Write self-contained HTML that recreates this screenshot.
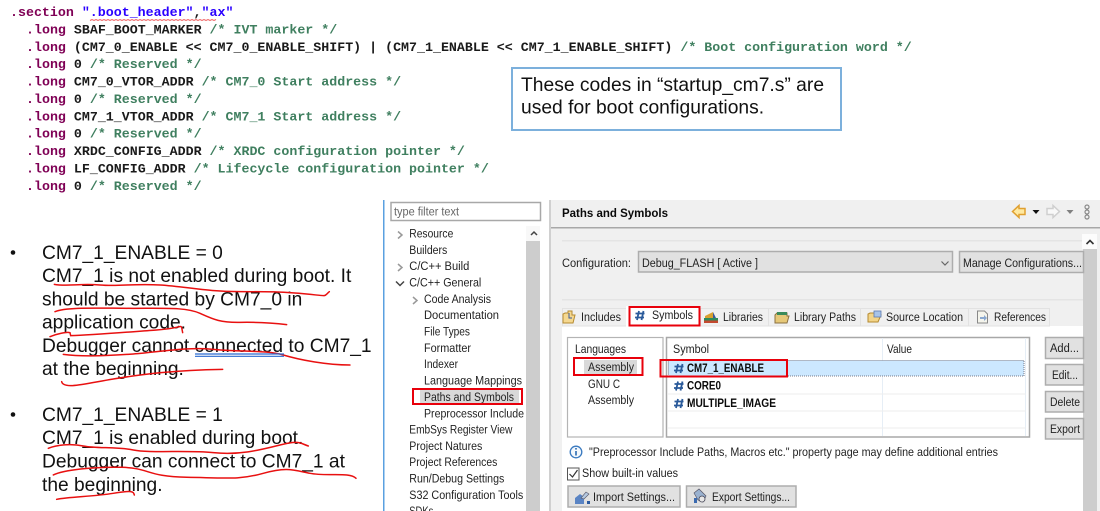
<!DOCTYPE html>
<html><head><meta charset="utf-8"><style>
html,body{margin:0;padding:0;background:#fff}
svg{display:block;filter:blur(.3px)}
.c{font:bold 13.31px "Liberation Mono",monospace;white-space:pre}
.k{fill:#7f0055}.s{fill:#2a00ff}.g{fill:#3f7f5f}.b{fill:#1a1a1a}
.t{font:19.2px "Liberation Sans",sans-serif;fill:#111}
.n{font:19.27px "Liberation Sans",sans-serif;fill:#111}
.u{font:12.2px "Liberation Sans",sans-serif;fill:#222}
.ub{font:bold 12.2px "Liberation Sans",sans-serif;fill:#0a0a0a}
.r{fill:none;stroke:#e8000b;stroke-width:2}
.w{fill:none;stroke:#e81010;stroke-width:4.5;stroke-linecap:round}
.btn{fill:#e1e1e1;stroke:#adadad;stroke-width:1.5}
.tab{fill:#f0f0f0;stroke:#e2e2e2;stroke-width:1}
</style></head><body>
<svg width="1100" height="511" viewBox="0 0 1100 511" xmlns="http://www.w3.org/2000/svg">
<rect width="1100" height="511" fill="#fff"/>
<!-- code -->
<g class="c" xml:space="preserve">
<text x="10" y="16" class="c"><tspan class="k">.section</tspan> <tspan class="s">".boot_header"</tspan><tspan class="b">,</tspan><tspan class="s">"ax"</tspan></text>
<text x="26" y="33.500" class="c"><tspan class="k">.long</tspan> <tspan class="b">SBAF_BOOT_MARKER</tspan> <tspan class="g">/* IVT marker */</tspan></text>
<text x="26" y="50.800" class="c"><tspan class="k">.long</tspan> <tspan class="b">(CM7_0_ENABLE &lt;&lt; CM7_0_ENABLE_SHIFT) | (CM7_1_ENABLE &lt;&lt; CM7_1_ENABLE_SHIFT)</tspan> <tspan class="g">/* Boot configuration word */</tspan></text>
<text x="26" y="68.200" class="c"><tspan class="k">.long</tspan> <tspan class="b">0</tspan> <tspan class="g">/* Reserved */</tspan></text>
<text x="26" y="85.600" class="c"><tspan class="k">.long</tspan> <tspan class="b">CM7_0_VTOR_ADDR</tspan> <tspan class="g">/* CM7_0 Start address */</tspan></text>
<text x="26" y="103" class="c"><tspan class="k">.long</tspan> <tspan class="b">0</tspan> <tspan class="g">/* Reserved */</tspan></text>
<text x="26" y="120.300" class="c"><tspan class="k">.long</tspan> <tspan class="b">CM7_1_VTOR_ADDR</tspan> <tspan class="g">/* CM7_1 Start address */</tspan></text>
<text x="26" y="137.700" class="c"><tspan class="k">.long</tspan> <tspan class="b">0</tspan> <tspan class="g">/* Reserved */</tspan></text>
<text x="26" y="155.200" class="c"><tspan class="k">.long</tspan> <tspan class="b">XRDC_CONFIG_ADDR</tspan> <tspan class="g">/* XRDC configuration pointer */</tspan></text>
<text x="26" y="172.500" class="c"><tspan class="k">.long</tspan> <tspan class="b">LF_CONFIG_ADDR</tspan> <tspan class="g">/* Lifecycle configuration pointer */</tspan></text>
<text x="26" y="190" class="c"><tspan class="k">.long</tspan> <tspan class="b">0</tspan> <tspan class="g">/* Reserved */</tspan></text>
</g>
<path d="M90 20.500l2-1 2 1 2-1 2 1 2-1 2 1 2-1 2 1 2-1 2 1 2-1 2 1 2-1 2 1 2-1 2 1 2-1 2 1 2-1 2 1 2-1 2 1 2-1 2 1 2-1 2 1 2-1 2 1 2-1 2 1 2-1 2 1 2-1 2 1 2-1 2 1 2-1 2 1 2-1 2 1 2-1 2 1 2-1 2 1 2-1 2 1 2-1 2 1 2-1 2 1 2-1 2 1 2-1 2 1 2-1 2 1 2-1 2 1 2-1 2 1 2-1 2 1 2-1" fill="none" stroke="#f06060" stroke-width="1"/>
<!-- note box -->
<rect x="512" y="68" width="329" height="62" fill="#fff" stroke="#7cb0dc" stroke-width="2"/>
<text x="521" y="91" class="n">These codes in “startup_cm7.s” are</text>
<text x="521" y="113.500" class="n">used for boot configurations.</text>
<!-- bullets text -->
<circle cx="13" cy="252.500" r="2.300" fill="#111"/>
<circle cx="13" cy="414.500" r="2.300" fill="#111"/>
<text x="42" y="259" class="t">CM7_1_ENABLE = 0</text>
<text x="42" y="282" class="t">CM7_1 is not enabled during boot. It</text>
<text x="42" y="305.300" class="t">should be started by CM7_0 in</text>
<text x="42" y="328.500" class="t">application code.</text>
<text x="42" y="352" class="t">Debugger cannot connected to CM7_1</text>
<text x="42" y="375" class="t">at the beginning.</text>
<text x="42" y="421" class="t">CM7_1_ENABLE = 1</text>
<text x="42" y="444" class="t">CM7_1 is enabled during boot.</text>
<text x="42" y="467.300" class="t">Debugger can connect to CM7_1 at</text>
<text x="42" y="491" class="t">the beginning.</text>
<g transform="translate(0,230) scale(.3333)">
<path class="w" d="M163 163C200 170 240 160 300 165S400 160 480 165S620 185 720 185S850 185 920 192S970 200 988 185"/>
<path class="w" d="M165 245C200 230 300 235 400 235S560 232 600 250S660 278 720 277S830 280 860 284"/>
<path class="w" d="M150 320C170 312 200 305 210 308L212 317C280 315 400 305 470 300S540 285 545 292L548 308"/>
<path class="w" d="M190 373C240 380 320 378 400 372S560 350 640 358S800 360 850 375S980 405 1050 405"/>
<path class="w" d="M185 455C190 480 260 460 340 447S520 420 668 418"/>
<path d="M585 372H852M585 379H852" fill="none" stroke="#2a6ad0" stroke-width="3.500"/>
<path class="w" d="M145 655C170 645 210 640 250 648S350 650 400 660S560 660 640 668S780 660 840 645S900 640 925 648"/>
<path class="w" d="M160 735C190 720 280 710 365 712S440 740 560 742S720 750 790 730S880 720 930 730S1050 725 1068 745"/>
<path class="w" d="M170 808C210 800 280 800 340 790S400 785 403 795"/>
</g>
<!-- left blue divider -->
<rect x="383" y="200" width="1.500" height="311" fill="#5aa0e0"/>
<!-- tree panel -->
<rect x="391" y="202.500" width="149.500" height="18" fill="#fff" stroke="#a8a8a8" stroke-width="1.500"/>
<text x="394" y="215.500" class="u" style="fill:#666" textLength="65" lengthAdjust="spacingAndGlyphs">type filter text</text>
<rect x="526" y="226" width="14" height="285" fill="#cdcdcd"/>
<rect x="526" y="226" width="14" height="15" fill="#f8f8f8"/>
<path d="M531 235l3-3 3 3" fill="none" stroke="#444" stroke-width="1.500"/>
<g>
<text x="409.300" y="237.500" class="u" textLength="44" lengthAdjust="spacingAndGlyphs">Resource</text>
<text x="409.300" y="254" class="u" textLength="38" lengthAdjust="spacingAndGlyphs">Builders</text>
<text x="409.300" y="270" class="u" textLength="60" lengthAdjust="spacingAndGlyphs">C/C++ Build</text>
<text x="409.300" y="286.500" class="u" textLength="72" lengthAdjust="spacingAndGlyphs">C/C++ General</text>
<text x="424" y="303" class="u" textLength="67" lengthAdjust="spacingAndGlyphs">Code Analysis</text>
<text x="424" y="319" class="u" textLength="75" lengthAdjust="spacingAndGlyphs">Documentation</text>
<text x="424" y="335.500" class="u" textLength="46" lengthAdjust="spacingAndGlyphs">File Types</text>
<text x="424" y="352" class="u" textLength="47" lengthAdjust="spacingAndGlyphs">Formatter</text>
<text x="424" y="368" class="u" textLength="34" lengthAdjust="spacingAndGlyphs">Indexer</text>
<text x="424" y="384.500" class="u" textLength="98" lengthAdjust="spacingAndGlyphs">Language Mappings</text>
<rect x="420" y="390" width="99" height="13" fill="#d9d9d9"/>
<text x="424" y="401" class="u" textLength="90" lengthAdjust="spacingAndGlyphs">Paths and Symbols</text>
<text x="424" y="417.500" class="u" textLength="100" lengthAdjust="spacingAndGlyphs">Preprocessor Include</text>
<text x="409.300" y="433.500" class="u" textLength="103" lengthAdjust="spacingAndGlyphs">EmbSys Register View</text>
<text x="409.300" y="450" class="u" textLength="73" lengthAdjust="spacingAndGlyphs">Project Natures</text>
<text x="409.300" y="466" class="u" textLength="88" lengthAdjust="spacingAndGlyphs">Project References</text>
<text x="409.300" y="482.500" class="u" textLength="95" lengthAdjust="spacingAndGlyphs">Run/Debug Settings</text>
<text x="409.300" y="499" class="u" textLength="114" lengthAdjust="spacingAndGlyphs">S32 Configuration Tools</text>
<text x="409.300" y="515" class="u" textLength="24" lengthAdjust="spacingAndGlyphs">SDKs</text>
</g>
<path d="M398 231.500l4 3.500-4 3.500M398 264l4 3.500-4 3.500M413 297l4 3.500-4 3.500" fill="none" stroke="#999" stroke-width="1.500"/>
<path d="M396 281.500l4 4 4-4" fill="none" stroke="#444" stroke-width="1.500"/>
<rect x="413" y="389" width="109" height="15" class="r"/>
<!-- right panel -->
<rect x="549" y="200" width="551" height="311" fill="#f0f0f0"/>
<rect x="549" y="200" width="2" height="311" fill="#d0d0d0"/>
<rect x="551" y="227" width="549" height="1.500" fill="#a8a8a8"/>
<text x="562" y="217" class="ub" textLength="106" lengthAdjust="spacingAndGlyphs">Paths and Symbols</text>
<!-- nav icons -->
<path d="M1012.500 211.500l6.500-6v3h6v6h-6v3z" fill="#ffe9a0" stroke="#e0a030" stroke-width="1.500"/>
<path d="M1032.500 210h7l-3.500 4z" fill="#111"/>
<path d="M1059.500 211.500l-6.500-6v3h-6v6h6v3z" fill="#f8f8f8" stroke="#cfcfcf" stroke-width="1.500"/>
<path d="M1066.500 210h7l-3.500 4z" fill="#808080"/>
<g fill="none" stroke="#8a8a8a" stroke-width="1.200"><circle cx="1087" cy="207" r="2"/><circle cx="1087" cy="212" r="2"/><circle cx="1087" cy="217" r="2"/></g>
<!-- separators -->
<rect x="562" y="240" width="521" height="1.500" fill="#e4e4e4"/>
<rect x="562" y="299" width="521" height="1.500" fill="#e4e4e4"/>
<!-- scrollbar -->
<rect x="1083" y="234" width="14" height="277" fill="#cdcdcd"/>
<rect x="1082" y="234" width="15" height="15" fill="#fcfcfc"/>
<path d="M1086.500 244l3.500-3.500 3.500 3.500" fill="none" stroke="#333" stroke-width="1.600"/>
<!-- config -->
<text x="562" y="267" class="u" textLength="69" lengthAdjust="spacingAndGlyphs">Configuration:</text>
<rect x="638.500" y="251.500" width="314" height="20.500" class="btn"/>
<text x="642" y="267" class="u" textLength="116" lengthAdjust="spacingAndGlyphs">Debug_FLASH  [ Active ]</text>
<path d="M941.500 261.500l3.500 3.500 3.500-3.500" fill="none" stroke="#666" stroke-width="1.200"/>
<rect x="959.500" y="251.500" width="124" height="21" class="btn"/>
<text x="963" y="267" class="u" textLength="119" lengthAdjust="spacingAndGlyphs">Manage Configurations...</text>
<!-- white pane -->
<rect x="562" y="326" width="521" height="185" fill="#fff"/>
<!-- tabs -->
<rect x="562.500" y="308.500" width="64" height="17.500" class="tab"/>
<rect x="700.500" y="308.500" width="68" height="17.500" class="tab"/>
<rect x="768.500" y="308.500" width="92" height="17.500" class="tab"/>
<rect x="860.500" y="308.500" width="108" height="17.500" class="tab"/>
<rect x="968.500" y="308.500" width="81" height="17.500" class="tab"/>
<rect x="626" y="306" width="74" height="21" fill="#fff"/>
<!-- tab icons -->
<path d="M563 323v-9l2-1h3v-2h4v4h3l-2 8z" fill="#f5d890" stroke="#b58a30" stroke-width="1"/>
<path d="M569 313v5h3" fill="none" stroke="#3a5a9a" stroke-width="1"/>
<text x="581" y="321" class="u" textLength="40" lengthAdjust="spacingAndGlyphs">Includes</text>
<path d="M637 320l2-9M641.500 320l2-9M635.500 313.500h9M635 317.500h9" stroke="#2a5a9a" stroke-width="1.800" fill="none"/>
<text x="652" y="319" class="u" textLength="41" lengthAdjust="spacingAndGlyphs">Symbols</text>
<path d="M705 316l8-4v6h-8z" fill="#d8a030"/><rect x="704" y="318" width="14" height="2.500" fill="#2d8a5a"/><rect x="704" y="320.500" width="14" height="2.500" fill="#c44a30"/><path d="M713 312l3 6h-3z" fill="#3a5a9a"/>
<text x="723" y="321" class="u" textLength="40" lengthAdjust="spacingAndGlyphs">Libraries</text>
<path d="M775 323v-8l2-2h10v3h2l-2 7z" fill="#e6c878" stroke="#8a7040" stroke-width="1"/><rect x="777" y="312" width="10" height="3" fill="#3a8a5a"/>
<text x="794" y="321" class="u" textLength="62" lengthAdjust="spacingAndGlyphs">Library Paths</text>
<path d="M868 322v-8l2-1h10v2h1l-3 7z" fill="#f2d488" stroke="#b58a30" stroke-width="1"/><rect x="874" y="311" width="7" height="6" fill="#a8c4e8" stroke="#5a7ab0" stroke-width=".8"/>
<text x="886" y="321" class="u" textLength="77" lengthAdjust="spacingAndGlyphs">Source Location</text>
<path d="M977.500 311h7l3 3v9h-10z" fill="#f4f4ec" stroke="#888" stroke-width="1"/><path d="M980 317h4v-2l3 3-3 3v-2h-4z" fill="#8aa8d0"/>
<text x="994" y="321" class="u" textLength="52" lengthAdjust="spacingAndGlyphs">References</text>
<rect x="629.500" y="307" width="70" height="18.500" class="r"/>
<!-- languages -->
<rect x="567.500" y="337.500" width="95.500" height="99.500" fill="#fff" stroke="#b4b4b4" stroke-width="1.200"/>
<text x="575" y="353" class="u" textLength="51" lengthAdjust="spacingAndGlyphs">Languages</text>
<rect x="584" y="360" width="53" height="14" fill="#d9d9d9"/>
<text x="588" y="371" class="u" textLength="46" lengthAdjust="spacingAndGlyphs">Assembly</text>
<text x="588" y="388" class="u" textLength="32" lengthAdjust="spacingAndGlyphs">GNU C</text>
<text x="588" y="404" class="u" textLength="46" lengthAdjust="spacingAndGlyphs">Assembly</text>
<rect x="574" y="358" width="68.500" height="17" class="r"/>
<!-- symbols table -->
<rect x="666.500" y="337.500" width="363" height="99.500" fill="#fff" stroke="#a8a8a8" stroke-width="1.500"/>
<text x="673" y="353" class="u" textLength="36" lengthAdjust="spacingAndGlyphs">Symbol</text>
<text x="887" y="353" class="u" textLength="25" lengthAdjust="spacingAndGlyphs">Value</text>
<rect x="882" y="338" width="1" height="98" fill="#e6eef6"/>
<rect x="1025" y="338" width="1" height="98" fill="#e6eef6"/>
<rect x="668" y="393.500" width="358" height="1" fill="#eeeeee"/>
<rect x="668" y="410.500" width="358" height="1" fill="#eeeeee"/>
<rect x="668" y="427.500" width="358" height="1" fill="#eeeeee"/>
<rect x="668.500" y="360.500" width="355.500" height="15.500" fill="#cce8ff" stroke="#556" stroke-width=".8" stroke-dasharray="1 1"/>
<g stroke="#2a5a9a" stroke-width="1.800" fill="none">
<path d="M676 373l2-9M680.500 373l2-9M674.500 366.500h9M674 370.500h9"/>
<path d="M676 390.500l2-9M680.500 390.500l2-9M674.500 384h9M674 388h9"/>
<path d="M676 408l2-9M680.500 408l2-9M674.500 401.500h9M674 405.500h9"/>
</g>
<text x="687" y="372" class="ub" textLength="77" lengthAdjust="spacingAndGlyphs">CM7_1_ENABLE</text>
<text x="687" y="389.500" class="ub" textLength="34" lengthAdjust="spacingAndGlyphs">CORE0</text>
<text x="687" y="407" class="ub" textLength="89" lengthAdjust="spacingAndGlyphs">MULTIPLE_IMAGE</text>
<rect x="660.500" y="360" width="126.500" height="16.500" class="r"/>
<!-- right buttons -->
<rect x="1045.500" y="337.500" width="38" height="21" class="btn"/>
<text x="1050" y="352" class="u" textLength="29" lengthAdjust="spacingAndGlyphs">Add...</text>
<rect x="1045.500" y="364.500" width="38" height="20.500" class="btn"/>
<text x="1052" y="379" class="u" textLength="26" lengthAdjust="spacingAndGlyphs">Edit...</text>
<rect x="1045.500" y="391.500" width="38" height="20.500" class="btn"/>
<text x="1050" y="406" class="u" textLength="30" lengthAdjust="spacingAndGlyphs">Delete</text>
<rect x="1045.500" y="418.500" width="38" height="20.500" class="btn"/>
<text x="1050" y="433" class="u" textLength="30" lengthAdjust="spacingAndGlyphs">Export</text>
<!-- info -->
<circle cx="576" cy="452" r="5.800" fill="#f4f8fc" stroke="#3a7ac0" stroke-width="1.300"/>
<rect x="575.200" y="451" width="1.600" height="4.500" fill="#2a6ab0"/><rect x="575.200" y="448" width="1.600" height="1.600" fill="#2a6ab0"/>
<text x="589" y="456" class="u" textLength="409" lengthAdjust="spacingAndGlyphs">"Preprocessor Include Paths, Macros etc." property page may define additional entries</text>
<rect x="567.500" y="468" width="11.500" height="12" fill="#fff" stroke="#555" stroke-width="1"/>
<path d="M569.500 474l3 3 5-7" fill="none" stroke="#333" stroke-width="1.200"/>
<text x="582" y="477" class="u" textLength="96" lengthAdjust="spacingAndGlyphs">Show built-in values</text>
<!-- import/export -->
<rect x="568" y="486" width="112" height="21" class="btn"/>
<path d="M575 504v-6l5-4 4 3v7z" fill="#5a84c4"/><path d="M581 498l5-6 3 2-5 5z" fill="#b4c8e0" stroke="#556" stroke-width=".6"/><rect x="587" y="501" width="3" height="3" fill="#2a5aa0"/>
<text x="593" y="501" class="u" textLength="82" lengthAdjust="spacingAndGlyphs">Import Settings...</text>
<rect x="686.500" y="486" width="109.500" height="21" class="btn"/>
<path d="M694 493l5-4 7 7-3 6-5-2z" fill="#9ab2d0" stroke="#556" stroke-width=".7"/><circle cx="702" cy="499" r="3" fill="#e8e8e8" stroke="#445" stroke-width=".8"/><rect x="694" y="498" width="3" height="5" fill="#3a6ab0"/>
<text x="712" y="501" class="u" textLength="78" lengthAdjust="spacingAndGlyphs">Export Settings...</text>
</svg>
</body></html>
